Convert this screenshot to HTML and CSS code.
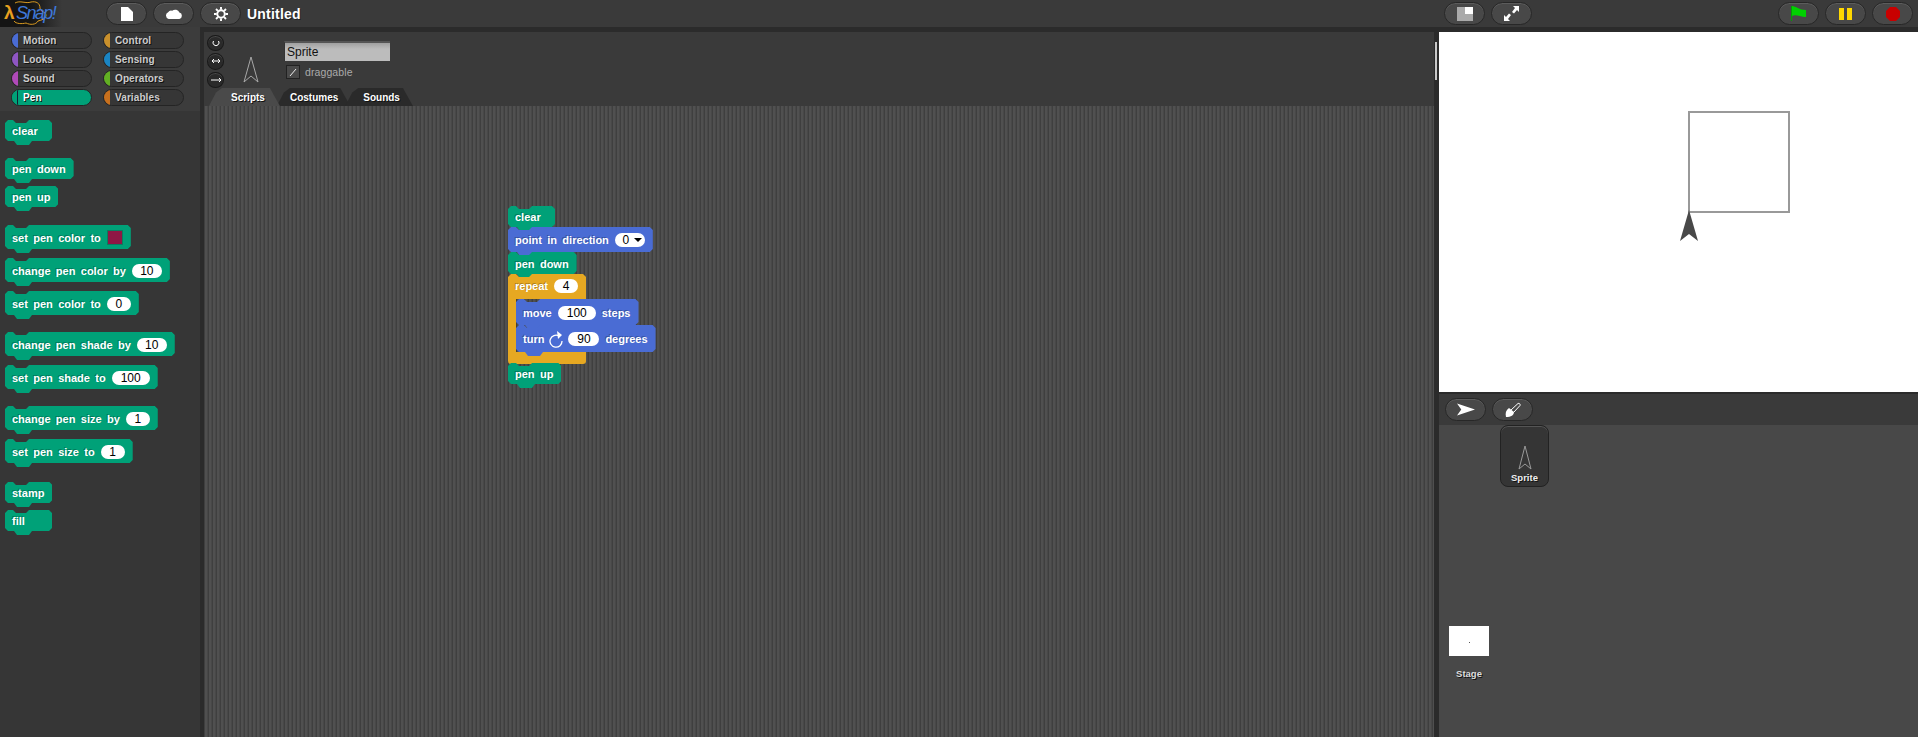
FILE: index.html
```html
<!DOCTYPE html>
<html lang="en">
<head>
<meta charset="utf-8">
<title>Snap! Untitled</title>
<link rel="stylesheet" href="styles.css">
</head>
<body>
<div class="app">
  <header class="topbar">
    <div class="logo"><svg width="60" height="27" viewBox="0 0 60 27"><path d="M15 3 C20 0 26 4 31 2 C36 1 40 3 40 8 C40 12 47 12 46 16 C45 19 42 20 38 21 C36 25 30 25 26 23 C22 24 16 24 14 21" fill="none" stroke="#d99a20" stroke-width="1"/></svg><span class="lambda">λ</span><span class="snap">Snap!</span></div>
    <div class="btngroup leftbtns">
      <button class="pill" aria-label="project"><svg width="12" height="14" viewBox="0 0 12 14"><path d="M0 0H7L12 5V14H0Z" fill="#fff"/></svg></button>
      <button class="pill" aria-label="cloud"><svg width="18" height="11" viewBox="0 0 20 12"><path d="M4 12A4 4 0 0 1 3.500 4.500 4 4 0 0 1 8 3 5 5 0 0 1 16 5 3.600 3.600 0 0 1 16 12Z" fill="#fff"/></svg></button>
      <button class="pill" aria-label="settings"><svg width="14" height="14" viewBox="0 0 16 16"><circle cx="8" cy="8" r="4.300" fill="none" stroke="#fff" stroke-width="2.200"/><path d="M8 0V3M8 13V16M0 8H3M13 8H16M2.300 2.300L4.400 4.400M11.600 11.600L13.700 13.700M2.300 13.700L4.400 11.600M11.600 4.400L13.700 2.300" stroke="#fff" stroke-width="2.200"/></svg></button>
      <span class="title">Untitled</span>
    </div>
    <div class="btngroup stagebtns">
      <button class="pill" aria-label="stage size"><svg width="16" height="14" viewBox="0 0 16 14"><rect width="16" height="14" fill="#aaa"/><rect x="8" width="8" height="7" fill="#fff"/></svg></button>
      <button class="pill" aria-label="fullscreen"><svg width="15" height="15" viewBox="0 0 15 15"><path d="M9 0H15V6L13 4L10 7.500L8 6L11 2ZM0 15V9L2 11L5 7.500L7 9L4 13L6 15Z" fill="#fff"/></svg></button>
    </div>
    <div class="btngroup runbtns">
      <button class="pill" aria-label="run"><svg width="15" height="15" viewBox="0 0 15 15"><path d="M.5 0V15" stroke="#00a000"/><path d="M1 0C5 0 8 4 15 4V11C9 11 5 8 1 10Z" fill="#00d000"/></svg></button>
      <button class="pill" aria-label="pause"><svg width="13" height="12" viewBox="0 0 13 12"><path d="M0 0H5V12H0ZM8 0H13V12H8Z" fill="#ffd800"/></svg></button>
      <button class="pill" aria-label="stop"><svg width="14" height="14" viewBox="0 0 14 14"><path d="M4 0H10L14 4V10L10 14H4L0 10V4Z" fill="#c80000"/></svg></button>
    </div>
  </header>

  <main class="workspace">
    <aside class="palette">
      <nav class="categories">
        <div class="cat"><i class="motion"></i>Motion</div>
        <div class="cat"><i class="control"></i>Control</div>
        <div class="cat"><i class="looks"></i>Looks</div>
        <div class="cat"><i class="sensing"></i>Sensing</div>
        <div class="cat"><i class="sound"></i>Sound</div>
        <div class="cat"><i class="operators"></i>Operators</div>
        <div class="cat on"><i class="pen"></i>Pen</div>
        <div class="cat"><i class="variables"></i>Variables</div>
      </nav>
      <div class="blocklist">
        <div class="group first">
          <div class="block pen-b w-clear">clear</div>
        </div>
        <div class="group wide">
          <div class="block pen-b">pen down</div>
          <div class="block pen-b">pen up</div>
        </div>
        <div class="group">
          <div class="block pen-b tall">set pen color to <b class="swatch"></b></div>
          <div class="block pen-b tall">change pen color by <b class="slot s10">10</b></div>
          <div class="block pen-b tall">set pen color to <b class="slot s0">0</b></div>
        </div>
        <div class="group">
          <div class="block pen-b tall">change pen shade by <b class="slot s10">10</b></div>
          <div class="block pen-b tall">set pen shade to <b class="slot s100">100</b></div>
        </div>
        <div class="group">
          <div class="block pen-b tall">change pen size by <b class="slot s0">1</b></div>
          <div class="block pen-b tall">set pen size to <b class="slot s0">1</b></div>
        </div>
        <div class="group lastgroup">
          <div class="block pen-b">stamp</div>
          <div class="block pen-b w-clear">fill</div>
        </div>
      </div>
    </aside>

    <section class="editor">
      <div class="spritebar">
        <div class="rotations">
          <span class="rot"><svg width="8" height="8" viewBox="0 0 8 8"><path d="M1.500 2A3 3 0 1 0 6.500 2" fill="none" stroke="#fff"/></svg></span>
          <span class="rot"><svg width="8" height="8" viewBox="0 0 8 8"><path d="M0 4H8M2 2L0 4L2 6M6 2L8 4L6 6" fill="none" stroke="#fff"/></svg></span>
          <span class="rot"><svg width="10" height="8" viewBox="0 0 10 8"><path d="M0 4H10M8 2L10 4L8 6" fill="none" stroke="#fff"/></svg></span>
        </div>
        <svg class="thumb" width="16" height="27" viewBox="0 0 16 27"><path d="M8 1L15 26L8 20L1 26Z" fill="none" stroke="#a8a8a8"/></svg>
        <div class="nameblock">
          <div class="namefield">Sprite</div>
          <label class="drag"><span class="check"><svg width="8" height="9" viewBox="0 0 8 9"><path d="M1 8L7 1" stroke="#eee"/></svg></span>draggable</label>
        </div>
      </div>
      <div class="tabs">
        <span class="tab active">Scripts</span>
        <span class="tab">Costumes</span>
        <span class="tab last">Sounds</span>
      </div>
      <div class="scripts">
        <div class="script">
          <div class="block pen-b sb w-clear">clear</div>
          <div class="block motion-b sb h29">point in direction <b class="slot s0 drop">0<em></em></b></div>
          <div class="block pen-b sb h26">pen down</div>
          <div class="cblock">
            <div class="block control-b chead">repeat <b class="slot s0">4</b></div>
            <div class="cbody">
              <div class="block motion-b sb h30">move <b class="slot s100">100</b> steps</div>
              <div class="block motion-b sb h31">turn <svg class="turn" width="16" height="18" viewBox="0 0 16 18"><path d="M11 6A6 6 0 1 0 14 11" fill="none" stroke="#fff" stroke-width="1.300"/><path d="M9 1L14 5L10 9Z" fill="#fff"/></svg> <b class="slot s90">90</b> degrees</div>
            </div>
            <div class="cfoot"></div>
          </div>
          <div class="block pen-b sb">pen up</div>
        </div>
        <div class="scrollthumb"></div>
      </div>
    </section>

    <aside class="rightcol">
      <div class="stage">
        <div class="square"></div>
        <svg class="turtle" width="18" height="32" viewBox="0 0 18 32"><path d="M9 0L18 31L9 24L0 31Z" fill="#484848"/></svg>
      </div>
      <div class="corralbar">
        <button class="pill" aria-label="new sprite"><svg width="18" height="13" viewBox="0 0 21 14"><path d="M0 0L21 7L0 14L5 7Z" fill="#fff"/></svg></button>
        <button class="pill" aria-label="paint"><svg width="16" height="15" viewBox="0 0 16 15"><path d="M6 8L13 1.500A1.500 1.500 0 0 1 15 3.500L9 10" fill="none" stroke="#fff"/><path d="M4 6L9 10C9 13 6 15 1 15C0 11 1 8 4 6Z" fill="#fff"/></svg></button>
      </div>
      <div class="corral">
        <div class="spriteicon">
          <svg width="14" height="24" viewBox="0 0 14 24"><path d="M7 0L13 23L7 18L1 23Z" fill="none" stroke="#9a9a9a"/></svg>
          <span>Sprite</span>
        </div>
        <div class="stageicon">
          <div class="stagethumb"><i></i></div>
          <span>Stage</span>
        </div>
      </div>
    </aside>
  </main>
</div>
</body>
</html>
```
FILE: styles.css
```css
* { box-sizing: border-box; }
html, body { margin: 0; height: 100%; background: #2b2b2b; overflow: hidden; }
body { font-family: "Liberation Sans", Arial, sans-serif; }
.app { width: 1918px; height: 737px; display: flex; flex-direction: column; }

.topbar { height: 27px; background: #3a3a3a; display: flex; align-items: center; position: relative; flex: none; }
.logo { width: 105px; height: 27px; position: relative; flex: none; background: linear-gradient(90deg, #141414 0, #141414 30px, #3a3a3a 62px); }
.logo svg { position: absolute; left: 0; top: 0; }
.lambda { position: absolute; left: 4px; top: 3px; color: #e8a020; font-size: 19px; line-height: 20px; font-weight: bold; }
.snap { position: absolute; left: 16px; top: 4px; color: #3f78d8; font-size: 18px; line-height: 19px; letter-spacing: -1.600px; font-style: italic; }
.btngroup { display: flex; gap: 6px; align-items: center; }
.leftbtns { margin-left: 1px; }
.stagebtns { margin-left: auto; }
.runbtns { margin-left: 246px; margin-right: 5px; }
.pill { width: 41px; height: 23px; padding: 0; border-radius: 12px; background: #484848; border: 1px solid #272727; box-shadow: inset 0 1px 0 #5c5c5c; display: flex; align-items: center; justify-content: center; }
.title { color: #fff; font-weight: bold; font-size: 14px; text-shadow: 1px 1px 0 #222; letter-spacing: .2px; }

.workspace { flex: 1; min-height: 0; display: grid; grid-template-columns: 200px 1234px 484px; padding-top: 5px; }

.palette { background: #363636; margin-top: -5px; display: flex; flex-direction: column; }
.categories { height: 84px; background: #3c3c3c; padding: 5px 0 0 11px; display: grid; grid-template-columns: 81px 81px; column-gap: 11px; row-gap: 2px; grid-auto-rows: 17px; flex: none; }
.cat { height: 17px; border-radius: 9px; background: #363636; border: 1px solid #242424; color: #ccc; font-size: 10px; font-weight: bold; padding-left: 11px; line-height: 16px; letter-spacing: .1px; position: relative; overflow: hidden; text-shadow: 1px 1px 0 #111; }
.cat i { position: absolute; left: 0; top: 0; bottom: 0; width: 6px; }
.cat.on { background: #00a178; color: #fff; }
.motion { background: #4a6cd4; } .control { background: #c9902c; } .looks { background: #8f56c3; }
.sensing { background: #1a85c4; } .sound { background: #b04ab9; } .operators { background: #62b023; }
.pen { background: #00a178; border-right: 1px solid #123; } .variables { background: #c8701d; }

.blocklist { padding: 9px 0 0 5px; display: flex; flex-direction: column; gap: 8px; align-items: flex-start; }
.group { display: flex; flex-direction: column; align-items: flex-start; }
.group.first { margin-bottom: 2px; }
.group.wide { margin-bottom: 3px; }
.group.lastgroup { margin-top: 2px; }
.block { min-height: 25px; padding: 4px 8px 7px 7px; margin-bottom: 3px; color: #fff; font-size: 11px; font-weight: bold; line-height: 14px; white-space: nowrap; word-spacing: 2.300px; display: inline-flex; align-items: center; gap: 6px; text-shadow: -1px -1px 0 rgba(0,0,0,.25);
  clip-path: polygon(0 3px, 3px 0, 8px 0, 11px 3px, 21px 3px, 24px 0, calc(100% - 3px) 0, 100% 3px, 100% calc(100% - 7px), calc(100% - 3px) calc(100% - 4px), 27px calc(100% - 4px), 24px 100%, 12px 100%, 9px calc(100% - 4px), 3px calc(100% - 4px), 0 calc(100% - 7px)); }
.block.tall { min-height: 28px; margin-bottom: 5px; }
.pen-b { background: #00a178; }
.motion-b { background: #4a6cd4; }
.control-b { background: #e6a822; }
.w-clear { min-width: 47px; }
.slot { background: #fff; color: #000; font-weight: normal; font-size: 12px; border-radius: 8px; height: 14px; line-height: 14px; text-align: center; text-shadow: none; display: inline-block; }
.s0 { width: 24px; } .s10 { width: 30px; } .s100 { width: 38px; } .s90 { width: 31px; }
.drop { width: 30px; padding-right: 8px; position: relative; }
.drop em { position: absolute; right: 3px; top: 5px; border-left: 4px solid transparent; border-right: 4px solid transparent; border-top: 4px solid #000; }
.swatch { width: 16px; height: 15px; background: #8f1745; border: 1px solid #0a7d60; display: inline-block; }
.turn { margin: 0 -2px; }

.editor { background: #3a3a3a; display: flex; flex-direction: column; position: relative; margin-left: 4px; min-width: 0; }
.spritebar { height: 56px; display: flex; position: relative; flex: none; }
.rotations { display: flex; flex-direction: column; gap: 2px; padding: 3px 0 0 3px; width: 39px; flex: none; }
.rot { width: 17px; height: 17px; border-radius: 50%; background: #2a2a2a; border: 1px solid #1a1a1a; box-shadow: inset 0 1px 0 #4a4a4a; display: flex; align-items: center; justify-content: center; }
.thumb { margin: 24px 0 0 0; flex: none; }
.nameblock { margin-left: 25px; padding-top: 9px; }
.namefield { width: 106px; height: 20px; background: linear-gradient(180deg, #a0a0a0 0, #bcbcbc 6px); border-top: 2px solid #555; border-left: 1px solid #333; font-size: 12px; line-height: 18px; padding-left: 2px; color: #111; }
.drag { display: flex; align-items: center; gap: 5px; color: #aaa; font-size: 10.500px; margin-top: 4px; margin-left: 2px; letter-spacing: .1px; }
.check { width: 14px; height: 14px; background: #4a4a4a; border: 1px solid #222; display: flex; align-items: center; justify-content: center; }

.tabs { height: 18px; flex: none; display: flex; padding-left: 5px; align-items: stretch; }
.tab { color: #fff; font-size: 10px; font-weight: bold; line-height: 19px; padding: 0 12px 0 13px; margin-right: -5px; text-shadow: 1px 1px 0 #111; background: #2a2a2a; clip-path: polygon(0 100%, 7px 25%, 13px 0, calc(100% - 10px) 0, calc(100% - 6px) 40%, 100% 100%); }
.tab.active { background: #4a4a4a; z-index: 1; padding: 0 15px 0 22px; margin-right: -3px; }
.tab.last { padding: 0 13px 0 18px; }

.scripts { flex: 1; position: relative; background: repeating-linear-gradient(90deg, #3f3f3f 0, #3f3f3f 1px, #505050 1px, #505050 3px, #484848 3px, #484848 4px); }
.script { position: absolute; left: 304px; top: 100px; display: flex; flex-direction: column; align-items: flex-start; }
.sb { margin-bottom: -4px; }
.h26 { min-height: 26px; } .h29 { min-height: 29px; } .h30 { min-height: 30px; } .h31 { min-height: 31px; }
.cblock { display: flex; flex-direction: column; align-items: flex-start; margin-bottom: -1px; }
.chead { min-height: 25px; margin-bottom: 0; padding-bottom: 6px; clip-path: polygon(0 3px, 3px 0, 8px 0, 11px 3px, 21px 3px, 24px 0, calc(100% - 3px) 0, 100% 3px, 100% 100%, 0 100%); }
.cbody { border-left: 8px solid #e6a822; display: flex; flex-direction: column; align-items: flex-start; }
.cbody .sb:last-child { margin-bottom: -4px; }
.cfoot { width: 78px; height: 12px; background: #e6a822; border-radius: 0 0 3px 3px; }
.scrollthumb { position: absolute; right: -3px; top: -64px; width: 2px; height: 38px; background: #c8c8c8; }

.rightcol { display: flex; flex-direction: column; min-width: 0; padding-left: 5px; }
.stage { height: 360px; flex: none; background: #fff; position: relative; }
.square { position: absolute; left: 249px; top: 79px; width: 102px; height: 102px; border: 2px solid #999; }
.turtle { position: absolute; left: 241px; top: 178px; }
.corralbar { height: 31px; margin-top: 2px; flex: none; background: #3a3a3a; display: flex; gap: 6px; padding: 0 0 0 6px; align-items: center; }
.corral { flex: 1; background: #484848; position: relative; }
.spriteicon { position: absolute; left: 61px; top: 0; width: 49px; height: 62px; border-radius: 8px; background: #353535; border: 1px solid #222; box-shadow: inset 0 1px 0 #555; display: flex; flex-direction: column; align-items: center; color: #eee; font-size: 9.500px; font-weight: bold; padding-top: 20px; gap: 2px; text-shadow: 1px 1px 0 #111; }
.stageicon { position: absolute; left: 10px; top: 201px; width: 40px; display: flex; flex-direction: column; align-items: center; color: #ddd; font-size: 9.500px; font-weight: bold; gap: 12px; text-shadow: 1px 1px 0 #111; }
.stagethumb { width: 40px; height: 30px; background: #fff; position: relative; }
.stagethumb i { position: absolute; left: 20px; top: 16px; width: 1px; height: 1px; background: #555; }
.stageicon span, .spriteicon span { display: block; }
```
